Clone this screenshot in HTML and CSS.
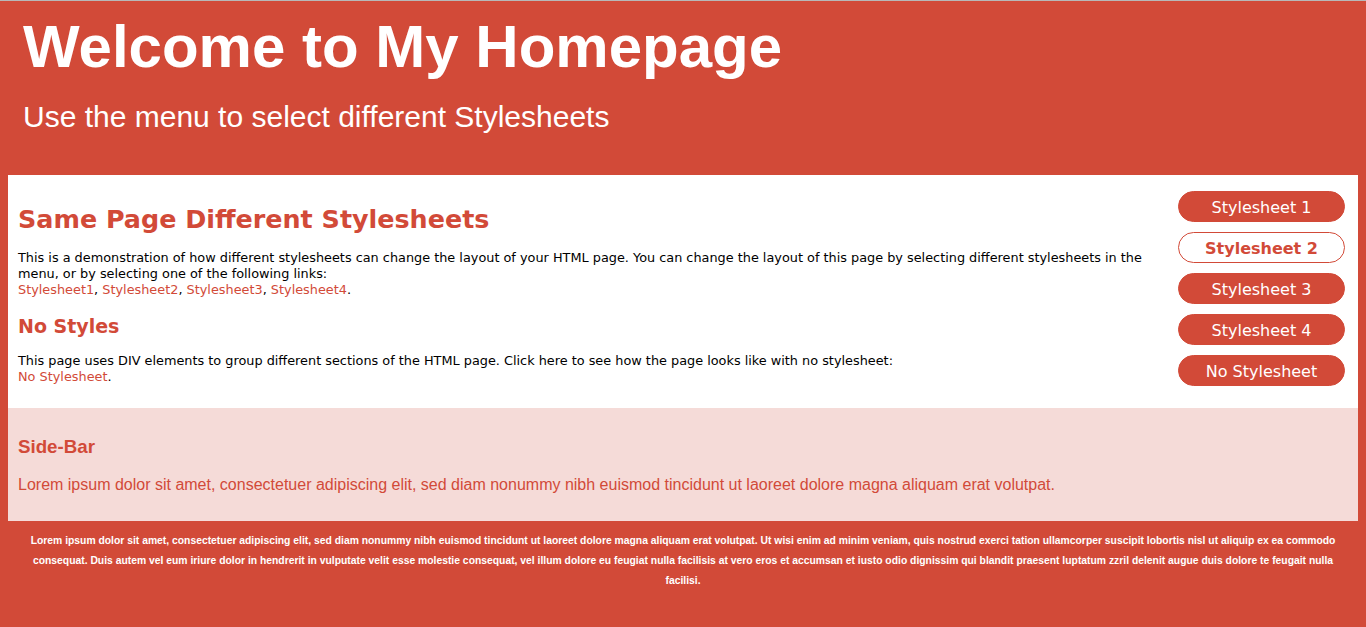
FILE: index.html
```html
<!DOCTYPE html>
<html lang="en">
<head>
<meta charset="utf-8">
<title>Welcome to My Homepage</title>
<link rel="stylesheet" href="styles.css">
</head>
<body>
<header class="header">
  <h1 class="header-title">Welcome to My Homepage</h1>
  <p class="header-sub">Use the menu to select different Stylesheets</p>
</header>
<div class="content">
  <main class="main">
    <h2 class="main-title">Same Page Different Stylesheets</h2>
    <p class="text">This is a demonstration of how different stylesheets can change the layout of your HTML page. You can change the layout of this page by selecting different stylesheets in the menu, or by selecting one of the following links:<br><a href="#" class="link">Stylesheet1</a>, <a href="#" class="link">Stylesheet2</a>, <a href="#" class="link">Stylesheet3</a>, <a href="#" class="link">Stylesheet4</a>.</p>
    <h3 class="sub-title">No Styles</h3>
    <p class="text">This page uses DIV elements to group different sections of the HTML page. Click here to see how the page looks like with no stylesheet:<br><a href="#" class="link">No Stylesheet</a>.</p>
  </main>
  <nav class="menu">
    <a href="#" class="menu-btn">Stylesheet 1</a>
    <a href="#" class="menu-btn menu-btn-active">Stylesheet 2</a>
    <a href="#" class="menu-btn">Stylesheet 3</a>
    <a href="#" class="menu-btn">Stylesheet 4</a>
    <a href="#" class="menu-btn">No Stylesheet</a>
  </nav>
</div>
<aside class="sidebar">
  <h3 class="sidebar-title">Side-Bar</h3>
  <p class="sidebar-text">Lorem ipsum dolor sit amet, consectetuer adipiscing elit, sed diam nonummy nibh euismod tincidunt ut laoreet dolore magna aliquam erat volutpat.</p>
</aside>
<footer class="footer">
  <p class="footer-text">Lorem ipsum dolor sit amet, consectetuer adipiscing elit, sed diam nonummy nibh euismod tincidunt ut laoreet dolore magna aliquam erat volutpat. Ut wisi enim ad minim veniam, quis nostrud exerci tation ullamcorper suscipit lobortis nisl ut aliquip ex ea commodo consequat. Duis autem vel eum iriure dolor in hendrerit in vulputate velit esse molestie consequat, vel illum dolore eu feugiat nulla facilisis at vero eros et accumsan et iusto odio dignissim qui blandit praesent luptatum zzril delenit augue duis dolore te feugait nulla facilisi.</p>
</footer>
</body>
</html>
```
FILE: styles.css
```css
html {
  background: #d24a38;
}
body {
  margin: 0;
  background: #d24a38;
  border-top: 1px solid #b8b8b8;
  font-family: "Liberation Sans", Arial, sans-serif;
}
.header {
  padding: 11px 23px 0;
  color: #ffffff;
}
.header-title {
  margin: 0 0 18px;
  font-size: 60px;
  font-weight: bold;
  line-height: 69px;
}
.header-sub {
  margin: 0 0 41px;
  font-size: 30px;
  line-height: 35px;
}
.content {
  margin: 0 8px;
  background: #ffffff;
  display: flex;
  padding: 0 13px 22px 10px;
}
.main {
  flex: 1;
  min-width: 0;
  padding-right: 20px;
  font-family: "DejaVu Sans", Verdana, sans-serif;
}
.main-title {
  margin: 29px 0 16px;
  font-size: 25.4px;
  line-height: 30px;
  font-weight: bold;
  color: #d24a38;
}
.text {
  margin: 0;
  font-size: 12.85px;
  line-height: 16px;
  color: #000000;
}
.link {
  color: #d24a38;
  text-decoration: none;
}
.sub-title {
  margin: 16px 0 15px;
  font-size: 19px;
  line-height: 24px;
  font-weight: bold;
  color: #d24a38;
}
.menu {
  width: 167px;
  flex: none;
  display: flex;
  flex-direction: column;
  gap: 10px;
  padding-top: 16px;
}
.menu-btn {
  box-sizing: border-box;
  height: 31px;
  border-radius: 16px;
  background: #d24a38;
  border: 1px solid #d24a38;
  color: #ffffff;
  font-family: "DejaVu Sans", Verdana, sans-serif;
  font-size: 16px;
  line-height: 31px;
  text-align: center;
  text-decoration: none;
}
.menu-btn-active {
  background: #ffffff;
  color: #d24a38;
  font-weight: bold;
}
.sidebar {
  margin: 0 8px;
  background: #f5dbd8;
  padding: 28px 10px 26px;
}
.sidebar-title {
  margin: 0 0 17px;
  font-size: 18.72px;
  line-height: 22px;
  font-weight: bold;
  color: #d24a38;
}
.sidebar-text {
  margin: 0;
  font-size: 16px;
  line-height: 20px;
  color: #d24a38;
}
.footer {
  padding: 10px 26px 36px;
}
.footer-text {
  margin: 0;
  font-size: 10.35px;
  line-height: 20px;
  font-weight: bold;
  color: #ffffff;
  text-align: center;
}
```
